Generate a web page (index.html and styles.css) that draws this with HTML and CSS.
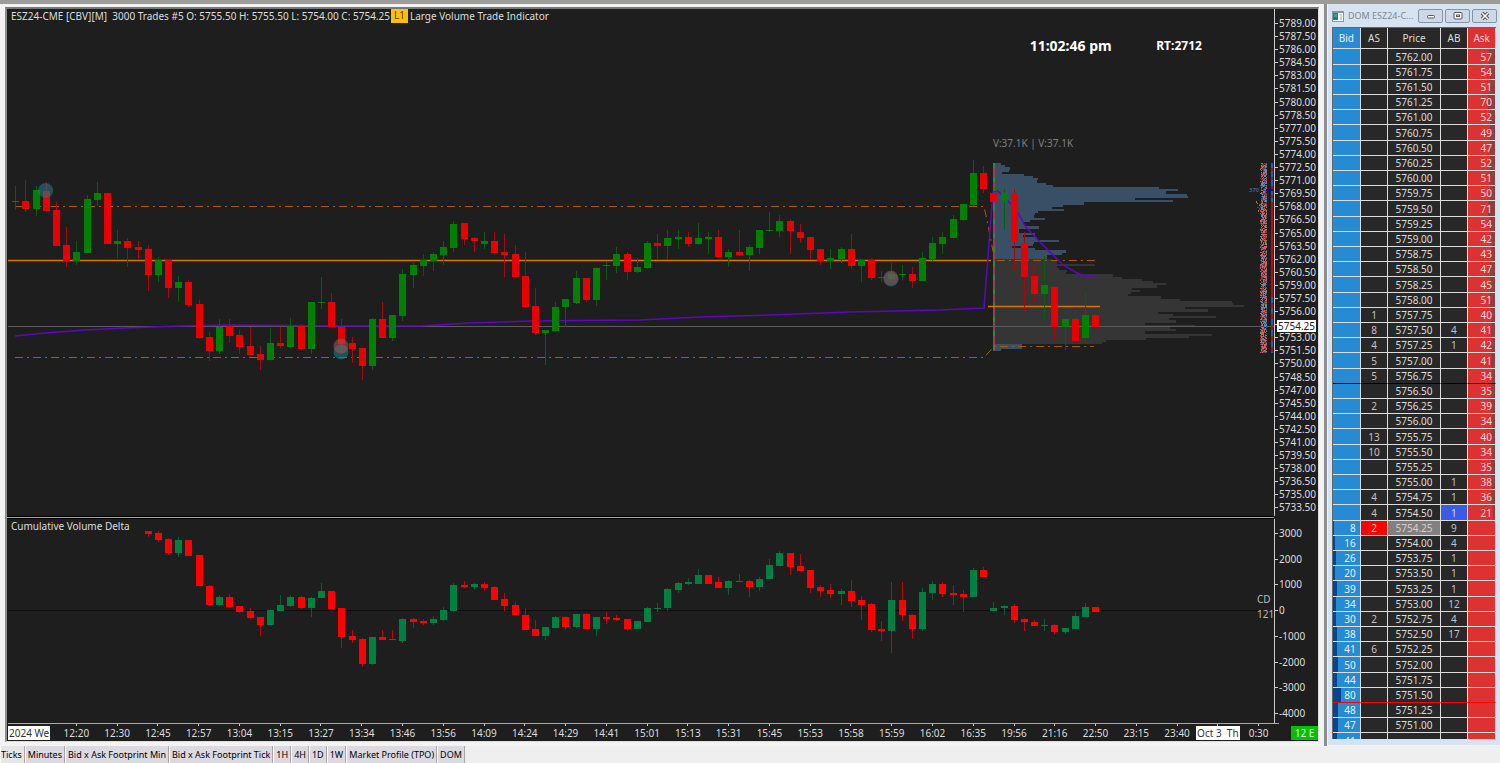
FILE: index.html
```html
<!DOCTYPE html>
<html lang="en">
<head>
<meta charset="utf-8">
<title>ESZ24-CME</title>
<link rel="stylesheet" href="styles.css">
</head>
<body>
<div class="desk">
  <main class="chart-window">
    <div class="chart">
      <section class="pane">
        <svg class="plot" id="price" viewBox="8 9 1266 507" preserveAspectRatio="none" aria-hidden="true"></svg>
        <header class="study-line">
          <span class="instrument">ESZ24-CME [CBV][M]&nbsp; 3000 Trades #5 O: 5755.50 H: 5755.50 L: 5754.00 C: 5754.25</span>
          <span class="badge">L1</span>
          <span>Large Volume Trade Indicator</span>
        </header>
        <div class="clock">11:02:46 pm</div>
        <div class="countdown">RT:2712</div>
        <div class="volume">V:37.1K | V:37.1K</div>
      </section>
      <div class="axis"><ol class="scale scale-price" id="prices"></ol><span class="last">5754.25</span></div>
      <div class="divider"></div>
      <section class="pane">
        <svg class="plot" id="delta" viewBox="8 519 1266 204" preserveAspectRatio="none" aria-hidden="true"></svg>
        <header class="study-line">Cumulative Volume Delta</header>
        <div class="cd"><span>CD</span><span>121</span></div>
      </section>
      <div class="axis"><ol class="scale scale-delta" id="deltas"></ol></div>
      <footer class="times">
        <span class="date">2024 We</span>
        <ol class="time-list" id="times"></ol>
        <span class="session">12 E</span>
      </footer>
    </div>
  </main>
  <aside class="dom">
    <header class="dom-title">
      <svg class="dom-icon" viewBox="0 0 12 11" aria-hidden="true"><rect width="12" height="11" fill="#8895a3"/><rect x="1" y="2" width="10" height="8" fill="#fff"/><rect x="1" y="2" width="5" height="7" fill="#2c7a7a"/><rect x="2" y="3" width="3" height="3" fill="#3aa76a"/><rect x="8" y="3" width="2" height="6" fill="#ccd"/></svg>
      <h1>DOM ESZ24-C...</h1>
      <button aria-label="Minimize"><svg viewBox="0 0 12 10"><rect x="2.500" y="4.500" width="7" height="2.500" rx="1" fill="#fff" stroke="#555"/></svg></button>
      <button aria-label="Maximize"><svg viewBox="0 0 12 10"><rect x="2" y="1.500" width="8" height="6.500" rx="1" fill="#fff" stroke="#555"/><rect x="4.500" y="4" width="3" height="1.500" fill="#fff" stroke="#555"/></svg></button>
      <button aria-label="Close"><svg viewBox="0 0 12 10"><path d="M3 2l6 6M9 2l-6 6" stroke="#555" stroke-width="3.500"/><path d="M3 2l6 6M9 2l-6 6" stroke="#fff" stroke-width="1.500"/></svg></button>
    </header>
    <div class="ladder">
      <table>
        <thead><tr><th class="bid">Bid</th><th>AS</th><th>Price</th><th>AB</th><th class="ask">Ask</th></tr></thead>
        <tbody id="ladder"></tbody>
      </table>
    </div>
  </aside>
</div>
<nav class="tabs">
  <button class="active">Ticks</button><button>Minutes</button><button>Bid x Ask Footprint Min</button><button>Bid x Ask Footprint Tick</button><button>1H</button><button>4H</button><button>1D</button><button>1W</button><button>Market Profile (TPO)</button><button>DOM</button>
</nav>
<script src="script.js"></script>
</body>
</html>
```
FILE: styles.css
```css
* { box-sizing: border-box; }
body {
  margin: 0;
  height: 100vh;
  display: flex;
  flex-direction: column;
  background: #efefef;
  font: 10px/14px "Noto Sans", "Open Sans", sans-serif;
  color: #ddd;
  overflow: hidden;
}
ol { list-style: none; margin: 0; padding: 0; }
button { font: inherit; border: 0; padding: 0; margin: 0; }
.desk {
  flex: 1;
  min-height: 0;
  display: flex;
  border-top: 4px solid #9c9c98;
}
.chart-window {
  flex: 1;
  min-width: 0;
  display: flex;
  padding: 3px 5px 4px 5px;
  background: #f3f3f3;
  border-right: 3px solid #8f8f8f;
}
.chart {
  flex: 1;
  min-width: 0;
  display: grid;
  grid-template-columns: minmax(0, 1fr) 44px;
  grid-template-rows: minmax(0, 507fr) 3px minmax(0, 204fr) 18px;
  background: #1e1e1e;
  border-left: 2px solid #8c8c8c;
  border-top: 2px solid #777;
  border-right: 1px solid #ddd;
  border-bottom: 1px solid #ddd;
}
.pane { position: relative; margin-left: 1px; min-height: 0; }
.plot { display: block; width: 100%; height: 100%; }
.study-line {
  position: absolute;
  top: 0;
  left: 3px;
  display: flex;
  gap: 1px;
  line-height: 14px;
  white-space: pre;
}
.badge { background: #ffc000; color: #4a3a00; padding: 0 3px; margin-right: 1px; line-height: 13px; }
.clock, .countdown { position: absolute; color: #fff; font-weight: 700; }
.clock { left: 80.7%; top: 5.5%; font-size: 14px; line-height: 18px; }
.countdown { left: 90.7%; top: 5.7%; font-size: 12px; line-height: 16px; }
.volume { position: absolute; left: 77.8%; top: 25%; color: #808080; }
.cd {
  position: absolute;
  right: 0;
  top: 36%;
  display: flex;
  flex-direction: column;
  gap: 1px;
  width: 17px;
  color: #bbb;
}
.axis { position: relative; border-left: 1px solid #ccc; min-height: 0; }
.scale {
  height: 100%;
  display: flex;
  flex-direction: column;
  justify-content: space-between;
}
.scale li { display: flex; align-items: center; line-height: 13px; height: 13px; flex-shrink: 0; }
.scale li::before { content: ""; width: 3px; height: 1px; background: #ccc; margin-right: 1px; }
.scale-price { padding: 8px 0 1px; }
.scale-delta { padding: 8px 0 3px; }
.last {
  position: absolute;
  left: 2px;
  top: 61.4%;
  padding: 0 1px;
  line-height: 12px;
  background: #fff;
  color: #222;
}
.divider { grid-column: 1 / -1; background: #a8a8a8; border: solid #000; border-width: 1px 0; margin-right: 44px; }
.times { grid-column: 1 / -1; display: flex; align-items: stretch; margin-left: 1px; }
.date, .day { background: #fff; color: #333; }
.date { position: relative; width: 42px; margin: 3px 6px 1px 0; padding-left: 1px; line-height: 14px; white-space: nowrap; }
.time-list { flex: 1; display: grid; grid-auto-flow: column; grid-auto-columns: minmax(0, 1fr); border-top: 1px solid #a8a8a8; margin-left: -48px; padding-left: 48px; }
.time-list li { display: flex; flex-direction: column; align-items: center; white-space: pre; line-height: 14px; }
.time-list li::before { content: ""; width: 1px; height: 2px; background: #ccc; }
.day { display: block; padding: 0 1px; }
.session { width: 27px; margin: 3px 0 1px 12px; background: #00c000; color: #dfd; text-align: center; }
.dom {
  width: 173px;
  padding: 1px 4px 6px 7px;
  background: #d6e3f1;
  border-left: 1px solid #eef4fa;
  border-bottom: 1px solid #eef4fa;
  display: flex;
  flex-direction: column;
}
.dom-title { display: flex; align-items: center; gap: 2px; height: 22px; margin-left: -3px; margin-right: -1px; flex: none; }
.dom-title h1 { flex: 1; margin: 0 0 0 2px; font-size: 9px; font-weight: 400; color: #7c8792; white-space: nowrap; }
.dom-icon { width: 12px; height: 11px; }
.dom-title button {
  width: 25px;
  height: 14px;
  display: grid;
  place-items: center;
  background: #cbd9e8;
  border: 1px solid #8494a6;
  border-radius: 2px;
}
.dom-title button svg { width: 12px; height: 10px; }
.ladder { flex: 1; min-height: 0; overflow: hidden; background: #282828; margin-left: -3px; border: solid #666; border-width: 1px 0 0 1px; }
table { width: 100%; border-collapse: separate; border-spacing: 0; table-layout: fixed; }
th, td { padding: 0; height: 15px; line-height: 14px; border: solid #ddd; border-width: 0 1px 1px 0; text-align: center; background: #282828; font-weight: 400; }
tbody tr:nth-child(5n+1) td { height: 16px; }
th { height: 21px; }
th:nth-child(1), th:nth-child(4), th:nth-child(5) { width: 17%; }
th:nth-child(2) { width: 17%; }
.bid { background: #268bd2; color: #e4f2ff; }
.ask { background: #dc3232; color: #ffd8d8; }
td.bid { text-align: right; padding-right: 4px; background: linear-gradient(90deg, #05458a var(--size, 0), #268bd2 var(--size, 0)); }
td.ask { text-align: right; padding-right: 3px; background: linear-gradient(270deg, #8c4040 var(--size, 0), #dc3232 var(--size, 0)); }
td.as { color: #d8bcbc; }
td.ab { color: #bcc0d8; }
td.hit { background: #f00; color: #fcc; }
td.lift { background: #3a5bea; color: #cde; }
td.now { background: #808080; color: #dcc; }
tr.open td { border-bottom-color: #000; }
tr.low td { border-bottom-color: #f00; }
.tabs { display: flex; height: 17px; flex: none; background: #efefef; font-size: 9px; }
.tabs button { background: #dcdae0; color: #000; padding: 0 2px; border-right: 1px solid #a5a5a5; border-left: 1px solid #fff; white-space: nowrap; }
.tabs .active { padding: 0 2px 0 0; background: #e6e6e8; }
```
FILE: script.js
```
const X0 = 15.3, STEP = 10.188;
const at = i => Math.round(X0 + i * STEP);

// kind, high, body top, body bottom, low
const priceBars = `G186,201,202,210 R180,201,209,212 G186,190,209,216 R182,191,211,212 R202,210,246,246 R227,245,261,267
G241,252,261,265 G195,199,253,253 G182,193,200,206 R193,193,244,244 G230,241,244,258 R238,241,248,267 R241,247,250,258
R245,249,275,291 G257,260,275,282 R260,260,288,298 G276,282,288,302 R280,282,305,307 R300,304,338,339 R332,337,351,361
G319,327,351,354 R319,326,336,343 R330,335,347,354 R327,346,355,355 R346,354,360,370 G328,343,360,360 R327,343,346,348
G318,326,347,348 R324,326,349,350 G302,302,349,354 G277,302,303,309 R293,302,327,327 R319,327,344,354 R337,343,349,363
R348,348,366,380 G318,319,366,370 R302,319,338,338 G315,315,338,341 G269,274,316,321 G263,265,275,288 G254,260,266,276
G252,254,261,271 G241,247,255,265 G221,224,248,252 R223,223,239,245 R237,238,241,252 G232,241,244,249 R232,241,253,253
R234,252,255,277 R245,254,277,277 R252,276,307,307 R288,306,333,335 G330,330,333,365 G302,307,331,332 G299,299,307,327
G271,278,303,304 R278,278,300,302 G267,268,300,306 G261,265,266,280 G247,254,266,273 R252,254,272,280 G258,267,272,273
G241,243,268,269 R234,243,246,260 G230,238,246,260 G230,237,239,249 R232,237,244,247 G223,238,244,245 G232,237,239,254
R230,237,257,258 G249,252,257,267 R230,252,255,256 G245,247,255,271 G230,230,248,254 G212,230,231,232 G215,221,231,237
R219,221,231,254 R224,232,238,243 R237,237,250,260 R249,249,261,265 G249,258,261,269 G247,249,259,263 R234,249,266,269
G260,260,266,282 R258,260,278,280 R271,277,278,282 G263,274,279,282 G265,274,275,280 R267,274,281,288 G252,258,281,281
G237,243,259,262 G232,237,244,254 G215,219,238,238 G204,204,220,221 G160,173,205,206 R166,173,189,193 R193,193,202,202
G189,193,202,230 R189,193,241,271 R232,243,277,311 R265,276,294,302 G256,285,294,319 R285,287,327,340 G319,319,327,350
R307,319,341,341 G293,315,338,343 R315,315,327,328`;
const deltaBars = `R531,531,534,537 R531,533,540,542 R538,539,553,555 G537,540,553,557 R540,540,556,556 R555,555,586,586
R585,586,605,606 G595,597,605,606 R594,597,607,607 R606,606,612,613 R608,611,618,619 R617,617,625,636 G609,610,625,625
G595,605,611,611 G595,597,606,607 R596,597,608,609 G597,598,608,617 G583,591,598,598 R591,591,609,609 R608,608,637,648
R630,636,640,643 R638,639,664,667 G637,637,664,665 R630,637,640,640 R630,639,640,640 G618,619,641,643 R618,619,622,628
R619,621,623,625 G616,619,623,625 G607,610,620,621 G583,585,611,612 R581,585,587,588 G583,584,587,590 R582,584,588,591
R586,587,600,600 R593,599,606,611 R602,605,615,615 R608,615,630,630 R620,629,636,636 G627,627,636,640 G616,617,628,628
R617,617,627,630 G614,614,627,628 R613,614,629,629 G617,617,629,636 R612,617,619,624 R615,618,620,621 R619,619,629,631
G621,621,629,629 G607,608,622,622 G603,608,609,612 G588,589,608,611 G582,583,590,593 G578,582,584,585 G569,575,584,584
R575,575,584,584 R577,582,588,588 G580,581,588,595 G574,581,582,582 R580,581,587,597 G577,579,587,591 G559,565,579,579
G551,553,566,566 R553,553,567,575 R554,566,571,571 R570,570,588,593 R585,587,591,597 R584,590,594,598 G589,591,594,605
R580,591,601,607 R596,600,605,620 R603,604,630,632 R621,629,631,641 G582,600,631,653 R582,600,615,621 R614,615,629,639
G588,592,629,631 G581,584,593,600 R582,584,594,597 R585,593,595,605 R590,594,597,612 G568,570,597,597 R567,570,577,577
G602,608,611,611 G605,606,608,615 R604,606,620,623 R618,619,622,631 R620,622,626,626 G619,625,626,631 R624,625,632,635
G628,628,632,634 G612,616,629,629 G603,607,617,617 R607,607,612,612`;

const rect = (x, y, w, h, fill) => `<rect x="${x}" y="${y}" width="${w}" height="${h}" fill="${fill}"/>`;
function candles(source, first, colors) {
  return source.trim().split(/\s+/).map((bar, n) => {
    const [high, top, bottom, low] = bar.slice(1).split(',').map(Number);
    const [body, wick] = colors[bar[0]];
    const x = at(first + n);
    return rect(x, high, 1, Math.max(low - high, 1), wick) + rect(x - 3, top, 7, Math.max(bottom - top, 1), body);
  }).join('');
}

// Volume at price: right edge of each row, from the session high downwards
const profile = [1001,1005,1010,1009,1002,1024,1033,1038,1037,1046,1053,1159,1178,1166,1187,1188,1135,1173,1084,1063,1052,1064,
1038,1035,1034,1045,1030,1023,1024,1039,1019,1019,1035,1023,1037,1059,1034,1033,1012,1035,1066,1062,1047,1047,
1052,1057,1095,1057,1059,1067,1066,1113,1122,1142,1153,1166,1157,1132,1140,1131,1128,1161,1180,1232,1233,1244,1185,1208,
1158,1173,1216,1169,1176,1145,1195,1170,1176,1145,1212,1189,1146,1106,1102,1022,1022,1001];
const ROW = 188 / profile.length;
const shade = n => (n < 44 || n > 82) ? '#384f66' : '#353535';
const rows = profile.map((edge, n) => {
  const y = Math.round(163 + n * ROW);
  return rect(994, y, edge - 994, Math.round(163 + (n + 1) * ROW) - y, shade(n));
}).join('');

// Bid and ask prints per price level at the right edge
let marks = '', state = 7;
const next = () => (state = (state * 1103515245 + 12345) % 2147483648) / 2147483648;
for (let y = 163; y < 353; y += 1) {
  const left = y > 200 && y < 212 ? 1256 : 1260;
  const blue = (y > 178 && y < 200) || (y > 294 && y < 336);
  for (let x = left; x < 1267; x += 1) {
    if (next() < (x < 1261 ? 0.3 : 0.85)) {
      const tint = next() < (blue ? 0.6 : 0.22);
      const dim = next() < 0.4;
      marks += rect(x, y, 1, 1, tint ? (dim ? '#35587a' : '#4f8fc4') : (dim ? '#7a3d3c' : '#cf625c'));
    }
  }
  marks += rect(1271, y, 2, 1, (y < 202 && y % 9 < 6) || (y > 294 && y % 11 < 6) ? '#1565b0' : '#b01010');
}
marks += rect(1266, 189, 8, 2, '#0000b0');

const line = (points, color, width, dash = '') =>
  `<polyline points="${points}" fill="none" stroke="${color}" stroke-width="${width}" stroke-dasharray="${dash}"/>`;
const DASH = '8 4 2 4';
const disc = (x, y, fill) => `<circle cx="${x}" cy="${y}" r="7.5" fill="${fill}" fill-opacity="0.55"/>`;
const TEAL = '#1f7f88', ROSE = '#9c5a5a';

document.getElementById('price').innerHTML =
  `<g shape-rendering="crispEdges">${rows}${rect(993, 163, 2, 188, '#93404f')}</g>` +
  line('994,163 994,351', '#2b8a3c', 2, '5 9') +
  line('8,326.5 1274,326.5', '#5c5c5c', 1) +
  line('15,206.500 984,206.500 988,225 992,246 995,260.500 1096,260.500', '#a85a08', 1, DASH) +
  line('15,357.500 984,357.500 994,346.500 1094,346.500', '#a85a08', 1, DASH) +
  line('8,260.500 991,260.500', '#e07000', 1.5) +
  line('988,306.500 1100,306.500', '#e07000', 1.5) +
  line('15,336 45,333 85,330 125,328 180,326 230,325 340,326 420,326 470,323 530,321 640,320 700,317 770,315 850,312 940,310 984,308 993,192 998,191 1010,203 1018,213 1026,227 1037,239 1048,250 1063,265 1077,273 1087,277 1096,277', '#5c08c0', 1.5) +
  `<g shape-rendering="crispEdges">${candles(priceBars, 0, { G: ['#008000', '#0b5c0b'], R: ['#e60000', '#a80808'] })}${marks}</g>` +
  rect(994, 188, 6, 1, '#008000') +
  '<text x="1249" y="192" font-size="6" fill="#4a86b8">370</text>' +
  disc(45.7, 190.5, TEAL) + disc(341, 352, TEAL) + disc(341, 346, ROSE) + disc(891, 279, TEAL) + disc(891, 278, '#8c4a4a');

document.getElementById('delta').innerHTML = `<g shape-rendering="crispEdges">${rect(8, 610, 1250, 1, '#0c0c0c')}${
  candles(deltaBars, 13, { G: ['#008040', '#0b5c34'], R: ['#ff0000', '#b80808'] })}</g>`;

const list = (id, items) => { document.getElementById(id).innerHTML = items.map(t => `<li>${t}</li>`).join(''); };
list('prices', Array.from({ length: 38 }, (_, n) => n === 23 ? '' : (5789 - n * 1.5).toFixed(2)));
list('deltas', [3000, 2000, 1000, 0, -1000, -2000, -3000, -4000]);
list('times', ('12:20 12:30 12:45 12:57 13:04 13:15 13:27 13:34 13:46 13:56 14:09 14:24 14:29 14:41 15:01 15:13 15:31 15:45 ' +
  '15:53 15:58 15:59 16:02 16:35 19:56 21:16 22:50 23:15 23:40').split(' ')
  .concat('<span class="day">Oct 3  Th</span>', '0:30'));

const asks = [57,54,51,70,52,49,47,52,51,50,71,54,42,43,47,45,51,40,41,42,41,34,35,39,34,40,34,35,38,36,21];
const bids = [8,16,26,20,39,34,30,38,41,50,44,80,48,47,41];
const soldAt = { 17: 1, 18: 8, 19: 4, 20: 5, 21: 5, 23: 2, 25: 13, 26: 10, 29: 4, 30: 4, 31: 2, 37: 2, 39: 6 };
const boughtAt = { 18: 4, 19: 1, 28: 1, 29: 1, 30: 1, 31: 9, 32: 4, 33: 1, 34: 1, 35: 1, 36: 12, 37: 4, 38: 17 };
const size = v => v ? ` style="--size:${Math.round(v / 10)}px"` : '';
document.getElementById('ladder').innerHTML = Array.from({ length: 46 }, (_, n) => {
  const ask = asks[n] ?? '', bid = bids[n - 31] ?? '';
  const price = n < 45 ? (5762 - n / 4).toFixed(2) : '';
  return `<tr class="${n === 21 ? 'open' : n === 42 ? 'low' : ''}"><td class="bid"${size(bid)}>${bid}</td>` +
    `<td class="as${n === 31 ? ' hit' : ''}">${soldAt[n] ?? ''}</td><td class="${n === 31 ? 'now' : ''}">${price}</td>` +
    `<td class="ab${n === 30 ? ' lift' : ''}">${boughtAt[n] ?? ''}</td><td class="ask"${size(ask)}>${ask}</td></tr>`;
}).join('');
```
